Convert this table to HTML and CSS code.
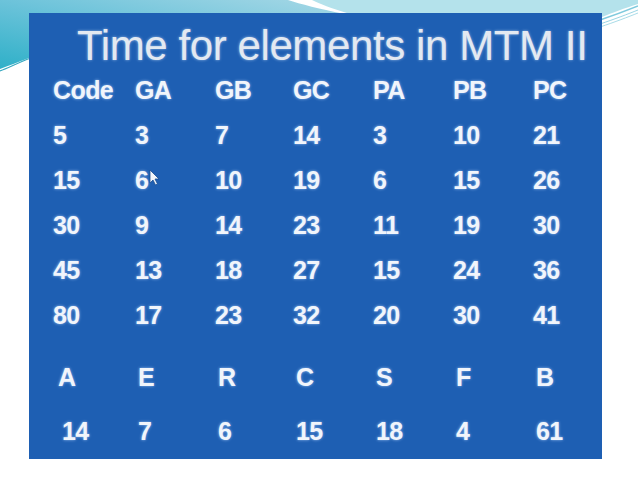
FILE: index.html
```html
<!DOCTYPE html>
<html>
<head>
<meta charset="utf-8">
<link rel="stylesheet" href="styles.css">
</head>
<body>
<div class="page">
  <svg class="deco" width="638" height="478" viewBox="0 0 638 478">
    <defs>
      <linearGradient id="lw" x1="0" y1="1" x2="1" y2="0">
        <stop offset="0" stop-color="#2fb0c8"/>
        <stop offset="0.5" stop-color="#6cc3da"/>
        <stop offset="1" stop-color="#a7d8e6"/>
      </linearGradient>
    </defs>
    <path d="M0 0 L288 0 C300 4 320 9 345 14 L29 58 C18 62 8 66 0 69 Z" fill="url(#lw)"/>
    <path d="M0 71 C10 67 20 62 31 58" stroke="#36a8bf" stroke-width="1.2" fill="none"/>
    <path d="M312 0 L638 0 L638 4 C625 8 612 13 602 17 L350 14 C330 8 320 4 312 0 Z" fill="#b4e2eb"/>
    <path d="M600 20 C615 15 628 10 638 6" stroke="#7fcadd" stroke-width="1.5" fill="none"/>
    <path d="M600 24 C615 19 628 14 638 10" stroke="#9ad5e4" stroke-width="1" fill="none"/>
    <path d="M600 27 C615 22 628 17 638 13" stroke="#a9dce8" stroke-width="1" fill="none"/>
  </svg>
  <div class="board">
    <h1 class="title">Time for elements in MTM II</h1>
    <div class="grid">
      <span>Code</span><span>GA</span><span>GB</span><span>GC</span><span>PA</span><span>PB</span><span>PC</span>
      <span>5</span><span>3</span><span>7</span><span>14</span><span>3</span><span>10</span><span>21</span>
      <span>15</span><span class="cur">6<svg class="pointer" width="11" height="17" viewBox="0 0 11 17"><path d="M1 1 L1 14 L4 11 L6.5 16 L8.5 15 L6 10 L10 10 Z" fill="#f2f6fb" stroke="#1a4f93" stroke-width="0.8"/></svg></span><span>10</span><span>19</span><span>6</span><span>15</span><span>26</span>
      <span>30</span><span>9</span><span>14</span><span>23</span><span>11</span><span>19</span><span>30</span>
      <span>45</span><span>13</span><span>18</span><span>27</span><span>15</span><span>24</span><span>36</span>
      <span>80</span><span>17</span><span>23</span><span>32</span><span>20</span><span>30</span><span>41</span>
      <span class="lt first">A</span><span class="lt">E</span><span class="lt">R</span><span class="lt">C</span><span class="lt">S</span><span class="lt">F</span><span class="lt">B</span>
      <span class="lv first">14</span><span class="lv">7</span><span class="lv">6</span><span class="lv">15</span><span class="lv">18</span><span class="lv">4</span><span class="lv">61</span>
    </div>
  </div>
</div>
</body>
</html>
```

FILE: styles.css
```css
html, body {
  margin: 0;
  padding: 0;
  background: #ffffff;
}
.page {
  position: relative;
  width: 638px;
  height: 478px;
  overflow: hidden;
  padding: 13px 0 0 29px;
  box-sizing: border-box;
  font-family: "Liberation Sans", Arial, sans-serif;
}
.deco {
  position: absolute;
  left: 0;
  top: 0;
}
.board {
  position: relative;
  width: 573px;
  height: 446px;
  background: #1e5fb3;
  box-sizing: border-box;
  padding: 11px 0 0 24px;
}
.title {
  margin: 0 0 0 24px;
  font-weight: normal;
  font-size: 42px;
  line-height: 44px;
  letter-spacing: -0.4px;
  color: #e3e9f1;
  text-shadow: 0 0 3px rgba(190, 215, 245, 0.75);
  white-space: nowrap;
}
.grid {
  display: grid;
  grid-template-columns: 82px 80px 78px 80px 80px 80px auto;
  grid-template-rows: repeat(6, 45px) 62px 54px;
  font-weight: bold;
  font-size: 25px;
  line-height: 45px;
  letter-spacing: -0.6px;
  color: #f1f5fb;
  text-shadow: 0 0 3px rgba(170, 205, 250, 0.85);
}
.grid span {
  align-self: end;
}
.lt, .lv {
  padding-left: 3px;
}
.lt.first {
  padding-left: 5px;
}
.lv.first {
  padding-left: 9px;
}
.cur {
  position: relative;
}
.pointer {
  position: absolute;
  left: 14px;
  top: 11px;
}
```
